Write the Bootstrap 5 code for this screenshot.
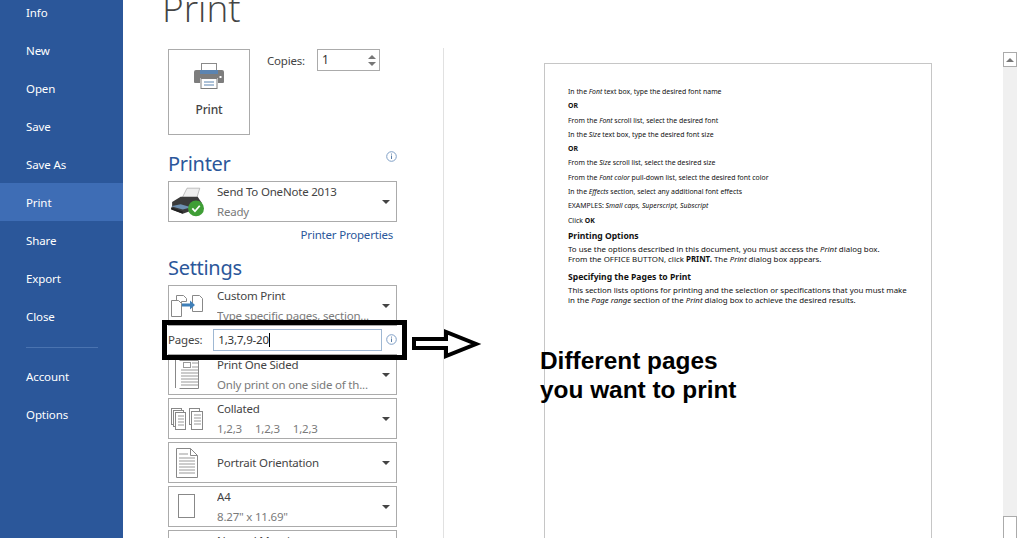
<!DOCTYPE html>
<html lang="en">
<head>
<meta charset="utf-8">
<title>Print</title>
<link rel="stylesheet" href="https://cdn.jsdelivr.net/npm/bootstrap@5.3.0/dist/css/bootstrap.min.css">
<style>
html,body{height:538px;overflow:hidden;background:#fff}
body{font-family:"Noto Sans","Open Sans",sans-serif;font-size:11.5px;letter-spacing:-.2px;color:#444;position:relative}
.stage{width:1024px;height:538px;overflow:hidden}
.side{width:123px;height:538px;background:#2b579a;flex:none;overflow:hidden}
.side-list{margin-top:-7px}
.side .nav-link{height:38px;line-height:40px;padding:0 0 0 26px;color:#fff;font-size:11.5px;letter-spacing:-.1px;border-radius:0}
.side .nav-link.is-on{background:#3e6db5;color:#fff}
.side-rule{height:1px;background:#4a73b0;margin:12px 26px 9px 26px;width:72px}
.mid{width:229px;flex:none;margin-left:45px}
.page-title{font-family:"Open Sans",sans-serif;font-weight:300;font-size:37px;letter-spacing:0;line-height:50px;height:49px;margin:-17px 0 17px -6px;color:#444}
.print-btn{width:82px;height:86px;border:1px solid #ababab;border-radius:0;background:#fff;color:#444;font-size:12px;font-weight:500;letter-spacing:-.2px;padding:13px 0 0;display:flex;flex-direction:column;align-items:center;gap:12px}
.copies-label{font-size:11.5px;margin:3px 0 0 17px;width:50px}
.copies-box{width:63px;height:22px;border:1px solid #ababab;padding:0 0 0 4px;color:#333;font-size:12px}
.spin{width:14px;gap:3px}
.tri-up,.tri-down{width:0;height:0;border-left:4px solid transparent;border-right:4px solid transparent}
.tri-up{border-bottom:4px solid #777}
.tri-down{border-top:4px solid #777}
.sect-head{color:#2b579a;font-size:20px;font-weight:400;letter-spacing:-.3px;line-height:26px;height:26px;margin:0}
.head-printer{margin-top:16px;margin-bottom:4px}
.head-settings{margin-top:10px;margin-bottom:4px}
.info-dot{width:11px;height:11px;flex:none}
.drop{height:41px;border:1px solid #ababab;background:#fff;display:flex;align-items:stretch;margin-bottom:3px;overflow:hidden}
.drop-icon{width:48px;padding-right:12px;flex:none;display:flex;align-items:center;justify-content:center}
.drop-text{flex:1;min-width:0;line-height:20px;white-space:nowrap;overflow:hidden}
.drop-text .sub{color:#7a7a7a}
.drop-text.one{display:flex;align-items:center}
.triple{gap:13px}
.caret-down{flex:none;width:8px;height:0;border-left:4px solid transparent;border-right:4px solid transparent;border-top:4px solid #444;align-self:center;margin:0 6px}
.prop-link{text-align:right;color:#2b579a;line-height:20px;padding-right:4px;margin-top:1px}
.pages-row{height:29px;margin-top:-1px}
.pages-input{margin-left:11px;width:170px;height:22px;border:1px solid #9fb8d3;padding:0 0 0 4px;line-height:20px;color:#333}
.caret-bar{display:inline-block;width:1px;height:14px;background:#000;vertical-align:-3px}
.vline{width:1px;height:490px;background:#e1e1e1;margin:48px 0 0 46px;flex:none}
.sheet-wrap{margin-left:100px;flex:none;padding-top:63px}
.sheet{width:388px;height:520px;border:1px solid #c6c6c6;background:#fff;padding:21px 23px 0 23px;color:#111;font-size:6.9px;letter-spacing:0}
.sheet p{margin:0;height:14.3px;line-height:14.3px;white-space:nowrap}
.sheet .big{font-size:7.9px;height:10.5px;line-height:10.5px}
.sheet .h-a,.sheet .h-b{font-size:8.6px;font-weight:700;line-height:12px;color:#111}
.sheet .h-a{margin:2px 0 2px}
.sheet .h-b{margin:6px 0 2px}
.sb-track{width:14px;height:538px;margin:52px 0 0 71px;background:#f0f0f0;flex:none}
.sb-btn{height:15px;background:#fff;border:1px solid #ababab;display:flex;align-items:center;justify-content:center}
.sb-thumb{height:40px;background:#fff;border:1px solid #ababab;margin-top:449px;border-bottom:0}
.note-box{position:absolute;left:162px;top:320px;width:245px;height:40px;border:5px solid #000}
.note-arrow{position:absolute;left:410px;top:328px}
.note-text{position:absolute;left:540px;top:346px;font-family:"Liberation Sans",Arial,sans-serif;font-weight:700;font-size:24.4px;letter-spacing:0;line-height:29px;color:#000}
</style>
</head>
<body>
<div class="stage d-flex">
  <div class="side">
    <nav class="nav flex-column side-list">
      <a class="nav-link" href="#">Info</a>
      <a class="nav-link" href="#">New</a>
      <a class="nav-link" href="#">Open</a>
      <a class="nav-link" href="#">Save</a>
      <a class="nav-link" href="#">Save As</a>
      <a class="nav-link is-on" href="#">Print</a>
      <a class="nav-link" href="#">Share</a>
      <a class="nav-link" href="#">Export</a>
      <a class="nav-link" href="#">Close</a>
      <div class="side-rule"></div>
      <a class="nav-link" href="#">Account</a>
      <a class="nav-link" href="#">Options</a>
    </nav>
  </div>

  <div class="mid">
    <div class="page-title">Print</div>
    <div class="d-flex align-items-start">
      <button class="btn print-btn" type="button">
        <svg width="30" height="26" viewBox="0 0 30 26">
          <rect x="7.5" y="0.5" width="15" height="8" fill="#fff" stroke="#8a8a8a"/>
          <path d="M2 7h26a2 2 0 0 1 2 2v10a1 1 0 0 1-1 1h-5v-5H6v5H1a1 1 0 0 1-1-1V9a2 2 0 0 1 2-2z" fill="#7d7d7d"/>
          <rect x="6" y="7" width="18" height="4" fill="#5b84b1"/>
          <rect x="7" y="15.500" width="16" height="10" fill="#fff" stroke="#7d7d7d"/>
          <path d="M10 19h10M10 22h10" stroke="#5b84b1" fill="none"/>
          <rect x="25.500" y="13" width="2" height="2" fill="#fff"/>
        </svg>
        <span>Print</span>
      </button>
      <div class="copies-label">Copies:</div>
      <div class="copies-box d-flex align-items-center justify-content-between">
        <span>1</span>
        <span class="spin d-flex flex-column align-items-center"><i class="tri-up"></i><i class="tri-down"></i></span>
      </div>
    </div>

    <div class="d-flex justify-content-between align-items-start">
      <h2 class="sect-head head-printer">Printer</h2>
      <svg class="info-dot mt-3" viewBox="0 0 11 11"><circle cx="5.500" cy="5.500" r="4.800" fill="none" stroke="#7f9fc6"/><path d="M5.500 4.500v3.500M5.500 2.600v1" stroke="#5b7fa8" fill="none"/></svg>
    </div>
    <div class="drop">
      <div class="drop-icon">
        <svg width="34" height="30" viewBox="2 1 32 28">
          <path d="M13 12L18 2h12l-3 10z" fill="#eee" stroke="#aaa" stroke-width=".7"/>
          <path d="M4 15l8-5h16l4 6-4 5-14 5-10-4z" fill="#3a3a3a"/>
          <path d="M3 19l11 3 8-2-10-3z" fill="#6d8fb0"/>
          <path d="M3 22l11 4v-2L3 20z" fill="#222"/>
          <circle cx="26.500" cy="21" r="7.500" fill="#3f9e36"/>
          <path d="M23 21l2.500 2.700 4.500-5.200" fill="none" stroke="#fff" stroke-width="1.700"/>
        </svg>
      </div>
      <div class="drop-text"><div>Send To OneNote 2013</div><div class="sub">Ready</div></div>
      <i class="caret-down"></i>
    </div>
    <div class="prop-link">Printer Properties</div>

    <h2 class="sect-head head-settings">Settings</h2>
    <div class="drop mb-0">
      <div class="drop-icon">
        <svg width="32" height="22" viewBox="0 0 32 22">
          <g fill="#fff" stroke="#888">
            <path d="M5.500 .5h7l3 3v3h-5v11h-5z"/>
            <path d="M.5 5.500h7l3 3v13H.5z"/>
            <path d="M21.500 .5h7l3 3v13h-10z"/>
          </g>
          <path d="M11 8.500h8v-3l5 4.500-5 4.500v-3h-8z" fill="#3f7fb8"/>
        </svg>
      </div>
      <div class="drop-text"><div>Custom Print</div><div class="sub">Type specific pages, section...</div></div>
      <i class="caret-down"></i>
    </div>
    <div class="pages-row d-flex align-items-center">
      <span>Pages:</span>
      <div class="pages-input">1,3,7,9-20<span class="caret-bar"></span></div>
      <svg class="info-dot ms-1" viewBox="0 0 11 11"><circle cx="5.500" cy="5.500" r="4.800" fill="none" stroke="#7f9fc6"/><path d="M5.500 4.500v3.500M5.500 2.600v1" stroke="#5b7fa8" fill="none"/></svg>
    </div>
    <div class="drop">
      <div class="drop-icon">
        <svg width="24" height="30" viewBox="0 0 24 30">
          <path d="M.5 0v28" stroke="#888" fill="none"/>
          <path d="M4.500 .5h19v28h-19" fill="#fff" stroke="#888"/>
          <rect x="8.500" y="2.500" width="7" height="5" fill="#fff" stroke="#999"/>
          <path d="M17 3h6M17 7h6M6 10h17M6 13h17M6 16h17M6 19h17M6 22h17M6 25h17" stroke="#999" fill="none"/>
        </svg>
      </div>
      <div class="drop-text"><div>Print One Sided</div><div class="sub">Only print on one side of th...</div></div>
      <i class="caret-down"></i>
    </div>
    <div class="drop">
      <div class="drop-icon">
        <svg width="32" height="22" viewBox="0 0 32 22">
          <g fill="#fff" stroke="#888">
            <rect x="0.500" y="0.500" width="10" height="16"/><rect x="2.500" y="2.500" width="10" height="16"/><rect x="4.500" y="4.500" width="10" height="17"/>
            <rect x="18.500" y="0.500" width="10" height="16"/><rect x="20.500" y="3.500" width="11" height="18"/>
          </g>
          <path d="M7 8h6M7 11h6M7 14h6M7 17h6M23 7h7M23 10h7M23 13h7M23 16h7" stroke="#999" fill="none"/>
        </svg>
      </div>
      <div class="drop-text"><div>Collated</div><div class="sub d-flex triple"><span>1,2,3</span><span>1,2,3</span><span>1,2,3</span></div></div>
      <i class="caret-down"></i>
    </div>
    <div class="drop">
      <div class="drop-icon">
        <svg width="22" height="30" viewBox="0 0 22 30">
          <path d="M.5.500h14l7 7v22H.5z" fill="#fff" stroke="#888"/>
          <path d="M14.500.500v7h7" fill="none" stroke="#888"/>
          <path d="M3 6h9M3 10h16M3 13h16M3 16h16M3 19h16M3 22h16M3 25h16" stroke="#999" fill="none"/>
        </svg>
      </div>
      <div class="drop-text one"><div>Portrait Orientation</div></div>
      <i class="caret-down"></i>
    </div>
    <div class="drop">
      <div class="drop-icon">
        <svg width="18" height="25" viewBox="0 0 18 25"><rect x=".5" y=".5" width="16" height="23" fill="#fff" stroke="#888"/></svg>
      </div>
      <div class="drop-text"><div>A4</div><div class="sub">8.27" x 11.69"</div></div>
      <i class="caret-down"></i>
    </div>
    <div class="drop">
      <div class="drop-icon"></div>
      <div class="drop-text"><div>Normal Margins</div></div>
      <i class="caret-down"></i>
    </div>
  </div>

  <div class="vline"></div>

  <div class="sheet-wrap">
    <div class="sheet">
      <p>In the <em>Font</em> text box, type the desired font name</p>
      <p><strong>OR</strong></p>
      <p>From the <em>Font</em> scroll list, select the desired font</p>
      <p>In the <em>Size</em> text box, type the desired font size</p>
      <p><strong>OR</strong></p>
      <p>From the <em>Size</em> scroll list, select the desired size</p>
      <p>From the <em>Font color</em> pull-down list, select the desired font color</p>
      <p>In the <em>Effects</em> section, select any additional font effects</p>
      <p>EXAMPLES: <em>Small caps, Superscript, Subscript</em></p>
      <p>Click <strong>OK</strong></p>
      <div class="h-a">Printing Options</div>
      <p class="big">To use the options described in this document, you must access the <em>Print</em> dialog box.</p>
      <p class="big">From the OFFICE BUTTON, click <strong>PRINT.</strong> The <em>Print</em> dialog box appears.</p>
      <div class="h-b">Specifying the Pages to Print</div>
      <p class="big">This section lists options for printing and the selection or specifications that you must make</p>
      <p class="big">in the <em>Page range</em> section of the <em>Print</em> dialog box to achieve the desired results.</p>
    </div>
  </div>

  <div class="sb-track">
    <div class="sb-btn"><i class="tri-up"></i></div>
    <div class="sb-thumb"></div>
  </div>
</div>

<div class="note-box"></div>
<svg class="note-arrow" width="76" height="34" viewBox="0 0 76 34"><path d="M4 11h32V4l30 12-30 12v-8H4z" fill="#fff" stroke="#000" stroke-width="4"/></svg>
<div class="note-text">Different pages<br>you want to print</div>
<script src="https://cdn.jsdelivr.net/npm/bootstrap@5.3.0/dist/js/bootstrap.bundle.min.js"></script>
</body>
</html>
